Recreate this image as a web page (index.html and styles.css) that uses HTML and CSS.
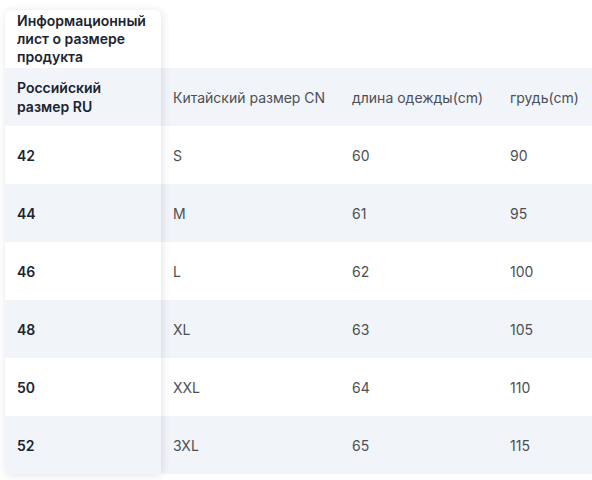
FILE: index.html
```html
<!DOCTYPE html>
<html lang="ru">
<head>
<meta charset="utf-8">
<link rel="stylesheet" href="styles.css">
</head>
<body>
<div class="page">
  <div class="fixed">
    <div class="cell title">Информационный лист о размере продукта</div>
    <div class="cell head alt">Российский размер RU</div>
    <div class="cell">42</div>
    <div class="cell alt">44</div>
    <div class="cell">46</div>
    <div class="cell alt">48</div>
    <div class="cell">50</div>
    <div class="cell alt">52</div>
  </div>
  <div class="rest">
    <div class="row alt"><div class="c c1">Китайский размер CN</div><div class="c c2">длина одежды(cm)</div><div class="c c3">грудь(cm)</div></div>
    <div class="row"><div class="c c1">S</div><div class="c c2">60</div><div class="c c3">90</div></div>
    <div class="row alt"><div class="c c1">M</div><div class="c c2">61</div><div class="c c3">95</div></div>
    <div class="row"><div class="c c1">L</div><div class="c c2">62</div><div class="c c3">100</div></div>
    <div class="row alt"><div class="c c1">XL</div><div class="c c2">63</div><div class="c c3">105</div></div>
    <div class="row"><div class="c c1">XXL</div><div class="c c2">64</div><div class="c c3">110</div></div>
    <div class="row alt"><div class="c c1">3XL</div><div class="c c2">65</div><div class="c c3">115</div></div>
  </div>
</div>
</body>
</html>
```
FILE: styles.css
```css
html, body {
  margin: 0;
  padding: 0;
  background: #ffffff;
}
body {
  font-family: Inter, "Noto Sans", sans-serif;
  font-size: 14px;
  color: #4b4f55;
  width: 592px;
  height: 480px;
  overflow: hidden;
}
.page {
  display: flex;
  padding: 10px 0 0 5px;
}
.fixed {
  position: relative;
  z-index: 1;
  width: 156px;
  flex: none;
  border-radius: 6px;
  overflow: hidden;
  background: #ffffff;
  box-shadow: 1px 1px 8px rgba(30, 40, 60, 0.13);
}
.cell {
  height: 58px;
  box-sizing: border-box;
  padding: 0 12px;
  display: flex;
  align-items: center;
  font-weight: 600;
  color: #1b2430;
}
.cell.title {
  line-height: 18px;
}
.cell.head {
  line-height: 19px;
}
.alt {
  background: #f1f4f9;
}
.rest {
  flex: 1;
  padding-top: 58px;
  min-width: 0;
}
.row {
  display: flex;
  height: 58px;
  align-items: center;
}
.c {
  box-sizing: border-box;
  padding: 0 12px;
  white-space: nowrap;
}
.c1 { width: 179px; }
.c2 { width: 158px; }
.c3 { flex: 1; }
```
